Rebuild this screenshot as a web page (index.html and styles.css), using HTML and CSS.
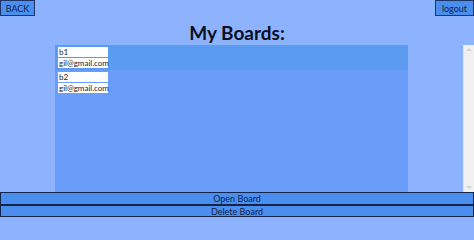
FILE: index.html
```html
<!DOCTYPE html>
<html>
<head>
<meta charset="utf-8">
<link rel="stylesheet" href="styles.css">
</head>
<body>
<div class="app">
  <div class="topbar">
    <button class="btn small">BACK</button>
    <button class="btn small">logout</button>
  </div>
  <h1 class="title">My Boards:</h1>
  <div class="middle">
    <div class="list">
      <div class="item selected">
        <div class="field">b1</div>
        <div class="field">gil@gmail.com</div>
      </div>
      <div class="item">
        <div class="field">b2</div>
        <div class="field">gil@gmail.com</div>
      </div>
    </div>
    <div class="spacer"></div>
    <div class="scrollbar">
      <div class="arrow up"></div>
      <div class="arrow down"></div>
    </div>
  </div>
  <div class="actions">
    <button class="btn wide">Open Board</button>
    <button class="btn wide">Delete Board</button>
  </div>
</div>
</body>
</html>
```

FILE: styles.css
```css
html, body {
  margin: 0;
  padding: 0;
}
body {
  background: #8db3fe;
  font-family: Lato, "Noto Sans", sans-serif;
  width: 474px;
  height: 240px;
  overflow: hidden;
}
.app {
  display: flex;
  flex-direction: column;
}
.topbar {
  display: flex;
  justify-content: space-between;
  height: 16px;
}
.btn {
  background: #4a8fee;
  border: 1px solid #1d3566;
  color: #13224a;
  font-family: Lato, "Noto Sans", sans-serif;
  font-size: 9px;
  padding: 0;
  margin: 0;
  line-height: 1;
}
.btn.small {
  height: 16px;
}
.btn.small:first-child {
  width: 35px;
}
.btn.small:last-child {
  width: 39px;
}
.title {
  margin: 0;
  height: 29px;
  display: flex;
  align-items: center;
  justify-content: center;
  font-family: Lato, "Noto Sans", sans-serif;
  font-size: 19px;
  font-weight: 700;
  color: #0b0f1e;
  padding-top: 3px;
  box-sizing: border-box;
}
.middle {
  display: flex;
  height: 147px;
}
.list {
  margin-left: 55px;
  width: 353px;
  background: #6a9cf9;
  display: flex;
  flex-direction: column;
}
.item {
  padding: 2px 0 1px 3px;
  display: flex;
  flex-direction: column;
  gap: 1px;
}
.item.selected {
  background: #5b9cf0;
  padding-bottom: 2px;
}
.field {
  width: 50px;
  height: 10px;
  background: #ffffff;
  font-size: 8px;
  line-height: 10px;
  color: #1a1a2a;
  padding-left: 1px;
  box-sizing: border-box;
  white-space: nowrap;
}
.spacer {
  flex: 1;
}
.scrollbar {
  width: 11px;
  background: #f0f0f0;
  border-left: 1px solid #e4e4e4;
  display: flex;
  flex-direction: column;
  justify-content: space-between;
  align-items: center;
  padding: 3px 0;
  box-sizing: border-box;
}
.arrow {
  width: 0;
  height: 0;
  border-left: 3px solid transparent;
  border-right: 3px solid transparent;
}
.arrow.up {
  border-bottom: 3px solid #d4d4d4;
}
.arrow.down {
  border-top: 3px solid #d4d4d4;
}
.actions {
  display: flex;
  flex-direction: column;
}
.btn.wide {
  width: 474px;
  height: 13px;
  border-color: #14244a;
}
.btn.wide + .btn.wide {
  margin-top: -1px;
  border-top-width: 2px;
}
```
